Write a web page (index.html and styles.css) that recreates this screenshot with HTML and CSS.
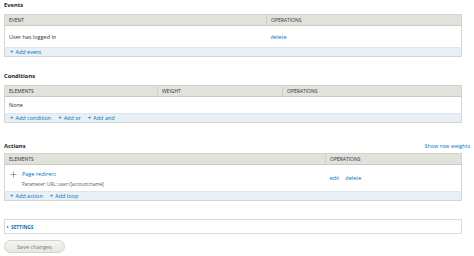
FILE: index.html
```html
<!DOCTYPE html>
<html>
<head>
<meta charset="utf-8">
<link rel="stylesheet" href="styles.css">
</head>
<body>
<div class="page">
  <section class="group g-events">
    <h2 class="title">Events</h2>
    <table class="grid t-events">
      <colgroup><col style="width:262px"><col></colgroup>
      <thead><tr><th>Event</th><th class="sep">Operations</th></tr></thead>
      <tbody>
        <tr class="row r-event"><td>User has logged in</td><td><a href="#">delete</a></td></tr>
        <tr class="add"><td colspan="2"><a href="#"><span class="plus">+</span>Add event</a></td></tr>
      </tbody>
    </table>
  </section>

  <section class="group g-conditions">
    <h2 class="title">Conditions</h2>
    <table class="grid t-cond">
      <colgroup><col style="width:153px"><col style="width:125px"><col></colgroup>
      <thead><tr><th>Elements</th><th class="sep">Weight</th><th class="sep">Operations</th></tr></thead>
      <tbody>
        <tr class="row r-none"><td colspan="3">None</td></tr>
        <tr class="add"><td colspan="3"><a href="#"><span class="plus">+</span>Add condition</a><a href="#"><span class="plus">+</span>Add or</a><a href="#"><span class="plus">+</span>Add and</a></td></tr>
      </tbody>
    </table>
  </section>

  <section class="group g-actions">
    <div class="title-row">
      <h2 class="title">Actions</h2>
      <a href="#" class="weights">Show row weights</a>
    </div>
    <table class="grid t-actions">
      <colgroup><col style="width:321px"><col></colgroup>
      <thead><tr><th>Elements</th><th class="sep">Operations</th></tr></thead>
      <tbody>
        <tr class="row r-action">
          <td>
            <div class="drag-item">
              <svg class="handle" width="7" height="7" viewBox="0 0 7 7"><path d="M3.5 0.5v6M0.5 3.5h6" stroke="#8a8a8a" stroke-width="0.8" fill="none"/></svg>
              <div class="desc">
                <a href="#">Page redirect</a>
                <div class="param">Parameter: URL: user:/[account:name]</div>
              </div>
            </div>
          </td>
          <td><a href="#">edit</a><a href="#" class="op2">delete</a></td>
        </tr>
        <tr class="add"><td colspan="2"><a href="#"><span class="plus">+</span>Add action</a><a href="#"><span class="plus">+</span>Add loop</a></td></tr>
      </tbody>
    </table>
  </section>

  <div class="settings"><span class="tri"></span><a href="#">Settings</a></div>

  <button class="save" type="button">Save changes</button>
</div>
</body>
</html>
```

FILE: styles.css
```css
html, body {
  margin: 0;
  padding: 0;
  background: #fff;
}
body {
  font-family: "Open Sans", "DejaVu Sans", sans-serif;
  font-size: 5.5px;
  color: #333;
}
a {
  color: #0074bd;
  text-decoration: none;
}
.page {
  padding: 1px 12px 0 4px;
  display: flex;
  flex-direction: column;
}
.title {
  font-size: 5.8px;
  font-weight: bold;
  color: #222;
  margin: 0;
  height: 8px;
  line-height: 8px;
}
.g-events .title { margin-bottom: 5px; }
.g-conditions { margin-top: 15px; }
.g-conditions .title { margin-bottom: 5px; }
.g-actions { margin-top: 19px; }
.title-row {
  display: flex;
  justify-content: space-between;
  align-items: center;
  margin-right: -8px;
  margin-bottom: 3px;
  height: 8px;
}
.weights { font-size: 5.4px; }
.grid {
  width: 458px;
  border-collapse: collapse;
  table-layout: fixed;
  border: 1px solid #d4d4d0;
}
.grid th {
  background: #e1e2dc;
  text-align: left;
  font-weight: normal;
  text-transform: uppercase;
  font-size: 5px;
  color: #333;
  padding: 0 4px;
  height: 10px;
  border-bottom: 1px solid #c9cac4;
}
.grid th.sep { border-left: 1px solid #cfd0ca; }
.grid td {
  padding: 0 4px;
  vertical-align: middle;
}
.r-event td { height: 21px; }
.r-none td { height: 16px; }
.r-action td { height: 26px; }
.add td {
  background: #e9f0f5;
  height: 8px;
  border-top: 1px solid #dfe5ea;
}
.add a { margin-right: 6px; }
.plus {
  font-weight: bold;
  font-size: 6px;
  margin: 0 2px 0 1px;
  color: #0074bd;
}
.drag-item {
  display: flex;
  align-items: flex-start;
  gap: 5px;
  padding-left: 1px;
}
.handle { margin-top: 1px; }
.desc {
  display: flex;
  flex-direction: column;
  gap: 3px;
}
.param {
  font-size: 4.6px;
  color: #555;
}
.op2 { margin-left: 6px; }
.settings {
  margin-top: 18px;
  width: 454px;
  height: 13px;
  border: 1px solid #dcdcd8;
  display: flex;
  align-items: center;
  padding-left: 2px;
  gap: 2px;
  box-sizing: content-box;
}
.settings a {
  font-weight: bold;
  text-transform: uppercase;
  font-size: 4.8px;
}
.tri {
  width: 0;
  height: 0;
  border-left: 2px solid #0074bd;
  border-top: 1.5px solid transparent;
  border-bottom: 1.5px solid transparent;
}
.save {
  align-self: flex-start;
  margin-top: 6px;
  width: 61px;
  height: 13px;
  border-radius: 7px;
  border: 1px solid #d2d2ce;
  background: linear-gradient(#f4f4f2, #e6e6e2);
  color: #7a7a7a;
  font-family: "Open Sans", "DejaVu Sans", sans-serif;
  font-size: 5.6px;
  padding: 0;
}
```
